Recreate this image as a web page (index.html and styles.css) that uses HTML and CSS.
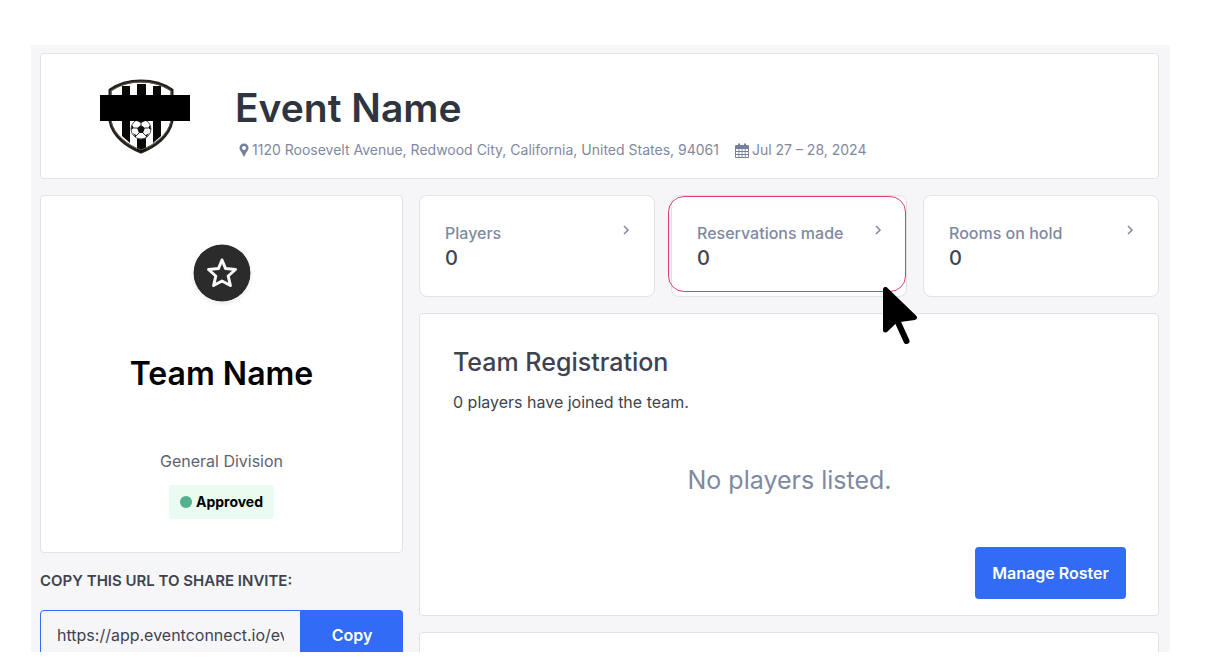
FILE: index.html
```html
<!DOCTYPE html>
<html lang="en">

<head>
    <meta charset="UTF-8">
    <meta name="viewport" content="width=device-width, initial-scale=1.0">
    <title>Event Name</title>
    <link rel="stylesheet" href="styles.css">
</head>

<body>
    <main class="board">
        <header class="card event-card">
            <svg class="event-logo" viewBox="0 0 90 76" aria-hidden="true">
                <defs>
                    <clipPath id="shield">
                        <path d="M41 3C53 3 64 7 72 12V42C72 57 54 67 41 73C28 67 10 57 10 42V12C18 7 29 3 41 3Z" />
                    </clipPath>
                </defs>
                <path d="M41 2C54 2 65 6 72 11V42C69 58 54 68 41 73C28 68 13 58 10 42V11C17 6 28 2 41 2Z" fill="#fff" stroke="#222" stroke-width="3" />
                <g clip-path="url(#shield)">
                    <path d="M22 7H30V64L22 57ZM37 5H46V75H37ZM53 7H61V57L53 64Z" fill="#080808" />
                </g>
                <path d="M41 3C53 3 64 7 71 12V42C68 56 54 66 41 71C28 66 14 56 11 42V12C18 7 29 3 41 3Z" fill="none" stroke="#6b5d42" stroke-width="1" />
                <circle cx="41" cy="50" r="10" fill="#fff" stroke="#555" stroke-width="1" />
                <path d="M41 46L45 49L43 54H39L37 49ZM41 40L45 42L41 44L37 42ZM50 46L51 51L48 49ZM32 46L31 51L34 49ZM46 56L49 54L46 59ZM36 56L33 54L36 59Z" fill="#111" />
                <path d="M41 46V43M45 49L48 49M43 54L46 57M39 54L36 57M37 49H34" stroke="#333" stroke-width="1" />
                <path d="M0 16H90V42H0Z" fill="#000" />
            </svg>
            <div class="event-info">
                <h1>Event Name</h1>
                <div class="event-meta">
                    <span class="meta-item">
                        <svg class="icon-pin" viewBox="0 0 10 14" aria-hidden="true">
                            <path fill-rule="evenodd" d="M5 0.5C2.4 0.5 0.5 2.4 0.5 5C0.5 7.5 3.3 9.5 4.3 13Q5 14 5.7 13C6.7 9.5 9.5 7.5 9.5 5C9.5 2.4 7.6 0.5 5 0.5ZM5 3A2 2 0 1 1 5 7A2 2 0 1 1 5 3Z" />
                        </svg>
                        1120 Roosevelt Avenue, Redwood City, California, United States, 94061
                    </span>
                    <span class="meta-item">
                        <svg class="icon-calendar" viewBox="0 0 14 15" aria-hidden="true">
                            <path fill-rule="evenodd" d="M1 2H3V0.5H5V2H9V0.5H11V2H13Q14 2 14 3V14Q14 15 13 15H1Q0 15 0 14V3Q0 2 1 2ZM1 6V8H3.5V6ZM4.3 6V8H6.7V6ZM7.5 6V8H9.8V6ZM10.6 6V8H13V6ZM1 9V11H3.5V9ZM4.3 9V11H6.7V9ZM7.5 9V11H9.8V9ZM10.6 9V11H13V9ZM1 12V14H3.5V12ZM4.3 12V14H6.7V12ZM7.5 12V14H9.8V12ZM10.6 12V14H13V12Z" />
                        </svg>
                        Jul 27 – 28, 2024
                    </span>
                </div>
            </div>
        </header>

        <div class="columns">
            <aside class="sidebar">
                <section class="card team-card">
                    <svg class="team-badge" viewBox="0 0 58 58" aria-hidden="true">
                        <circle cx="29" cy="29" r="28.5" fill="#2b2b2b" />
                        <path d="M29 16L32.5 24.5L42.5 25.5L35.2 32L37.4 41.5L29 37L20.6 41.5L22.8 32L15.5 25.5L25.5 24.5Z" fill="none" stroke="#f8f8f8" stroke-width="3" stroke-linejoin="round" />
                    </svg>
                    <h2 class="team-name">Team Name</h2>
                    <p class="division">General Division</p>
                    <span class="status"><span class="status-dot"></span>Approved</span>
                </section>
                <label class="share-label" for="inviteUrl">COPY THIS URL TO SHARE INVITE:</label>
                <div class="share-row">
                    <input type="text" id="inviteUrl" value="https://app.eventconnect.io/events" readonly>
                    <button type="button" class="btn btn-copy">Copy</button>
                </div>
            </aside>

            <div class="content">
                <div class="stats">
                    <a class="card stat" href="#players">
                        <span class="stat-label">Players</span>
                        <span class="stat-value">0</span>
                        <svg class="chevron" viewBox="0 0 8 10" aria-hidden="true"><path d="M2 1L6 5L2 9" /></svg>
                    </a>
                    <a class="card stat" href="#reservations">
                        <span class="stat-label">Reservations made</span>
                        <span class="stat-value">0</span>
                        <svg class="chevron" viewBox="0 0 8 10" aria-hidden="true"><path d="M2 1L6 5L2 9" /></svg>
                        <span class="highlight"></span>
                        <svg class="pointer" viewBox="0 0 34 58" aria-hidden="true">
                            <path d="M2.5 2.5V43L13 33L31.5 30.5Z" fill="#000" stroke="#000" stroke-width="5" stroke-linejoin="round" />
                            <path d="M13 31L23.5 54" stroke="#000" stroke-width="6" stroke-linecap="round" />
                        </svg>
                    </a>
                    <a class="card stat" href="#rooms">
                        <span class="stat-label">Rooms on hold</span>
                        <span class="stat-value">0</span>
                        <svg class="chevron" viewBox="0 0 8 10" aria-hidden="true"><path d="M2 1L6 5L2 9" /></svg>
                    </a>
                </div>

                <section class="card registration" id="players">
                    <h2>Team Registration</h2>
                    <p>0 players have joined the team.</p>
                    <p class="empty">No players listed.</p>
                    <button type="button" class="btn btn-roster">Manage Roster</button>
                </section>

                <section class="card next-card" id="reservations"></section>
            </div>
        </div>
    </main>
</body>

</html>
```
FILE: styles.css
```css
* {
    box-sizing: border-box;
}

body {
    margin: 0;
    padding: 45px 38px 20px 31px;
    height: 100vh;
    display: flex;
    background: #fff;
    color: #3f434f;
    font-family: Inter, 'Liberation Sans', sans-serif;
    font-size: 16px;
    line-height: 24px;
}

h1,
h2,
p {
    margin: 0;
}

.board {
    flex: 1;
    min-width: 0;
    padding: 8px 11px 0 9px;
    background: #f6f6f9;
    overflow: hidden;
}

.card {
    background: #fff;
    border: 1px solid #dfe2e6;
    border-radius: 4px;
}

/* Event header */
.event-card {
    display: flex;
    align-items: flex-start;
    gap: 45px;
    padding: 25px 59px 14px;
    margin-bottom: 16px;
}

.event-logo {
    width: 90px;
    height: 76px;
    flex: none;
}

.event-info h1 {
    padding-top: 5px;
    font-size: 39px;
    font-weight: 600;
    line-height: 48px;
    color: #2f3540;
}

.event-meta {
    display: flex;
    gap: 16px;
    padding: 6px 0 2px 4px;
    font-size: 14px;
    color: #7f89a0;
}

.meta-item {
    display: flex;
    align-items: center;
    gap: 3px;
}

.meta-item svg {
    fill: #75809a;
}

.icon-pin {
    width: 10px;
    height: 14px;
}

.icon-calendar {
    width: 14px;
    height: 15px;
}

/* Two columns */
.columns {
    display: grid;
    grid-template-columns: 363px minmax(0, 1fr);
    gap: 16px;
}

.team-card {
    display: flex;
    flex-direction: column;
    align-items: center;
    padding: 48px 24px 33px;
}

.team-badge {
    width: 58px;
    height: 58px;
    border-radius: 50%;
    box-shadow: 0 2px 4px rgba(0, 0, 0, 0.08);
}

.team-name {
    margin-top: 52px;
    font-size: 32px;
    font-weight: 600;
    line-height: 40px;
    color: #000;
}

.division {
    margin-top: 55px;
    color: #5f6370;
}

.status {
    display: flex;
    align-items: center;
    gap: 4px;
    margin-top: 12px;
    padding: 5px 11px;
    border-radius: 4px;
    background: #eafbf2;
    font-size: 14px;
    font-weight: 700;
    color: #000;
}

.status-dot {
    width: 12px;
    height: 12px;
    border-radius: 50%;
    background: #54b092;
}

.share-label {
    display: block;
    padding: 16px 0 17px;
    font-size: 15px;
    font-weight: 600;
}

.share-row {
    display: flex;
}

.share-row input {
    flex: 1;
    min-width: 0;
    height: 50px;
    padding: 0 16px;
    border: 1px solid #316bf6;
    border-radius: 4px 0 0 4px;
    background: #f6f6f9;
    color: #3f434f;
    font: inherit;
}

.btn {
    border: 0;
    border-radius: 4px;
    background: #316bf6;
    color: #fff;
    font: inherit;
    font-weight: 600;
}

.btn-copy {
    width: 102px;
    border-radius: 0 4px 4px 0;
}

/* Stat cards */
.stats {
    display: grid;
    grid-template-columns: repeat(3, minmax(0, 1fr));
    gap: 16px;
    margin-bottom: 16px;
}

.stat {
    position: relative;
    display: grid;
    grid-template-columns: 1fr auto;
    padding: 25px 24px 25px 25px;
    border-radius: 8px;
    color: inherit;
    text-decoration: none;
}

.stat-label {
    font-weight: 500;
    color: #7f89a0;
}

.stat-value {
    grid-row: 2;
    font-size: 20px;
    font-weight: 500;
    line-height: 26px;
}

.chevron {
    width: 8px;
    height: 10px;
    margin-top: 4px;
    fill: none;
    stroke: #7f89a0;
    stroke-width: 1.5;
}

.highlight {
    position: absolute;
    inset: 0 0 4px -4px;
    border: 1px solid #e23f6e;
    border-radius: 16px;
}

.pointer {
    position: absolute;
    top: 91px;
    right: -11px;
    z-index: 1;
    width: 34px;
    height: 58px;
}

/* Registration */
.registration {
    display: flex;
    flex-direction: column;
    padding: 32px 32px 16px 33px;
    margin-bottom: 16px;
}

.registration h2 {
    font-size: 25px;
    font-weight: 500;
    line-height: 32px;
}

.registration p {
    margin-top: 12px;
}

.registration .empty {
    margin-top: 50px;
    font-size: 25px;
    line-height: 32px;
    text-align: center;
    color: #7f89a0;
}

.btn-roster {
    align-self: flex-end;
    width: 151px;
    height: 52px;
    margin-top: 51px;
}

.next-card {
    height: 300px;
}
```
